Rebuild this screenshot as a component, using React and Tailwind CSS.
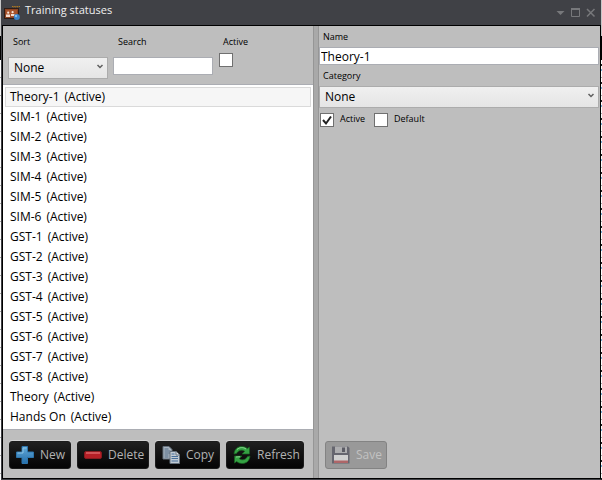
import { useState } from 'react';

const initialStatuses = [
  'Theory-1', 'SIM-1', 'SIM-2', 'SIM-3', 'SIM-4', 'SIM-5', 'SIM-6',
  'GST-1', 'GST-2', 'GST-3', 'GST-4', 'GST-5', 'GST-6', 'GST-7', 'GST-8',
  'Theory', 'Hands On',
];

const AppIcon = () => (
  <svg width="16" height="16" viewBox="0 0 16 16" aria-hidden="true">
    <path d="M8 1.5h8" stroke="#b07a22" strokeWidth="1" strokeDasharray="1.5 .7" />
    <path d="M9 2.5h6" stroke="#6d5026" strokeWidth="1" strokeDasharray="1 1" />
    <rect x="0.5" y="3.5" width="14" height="10" fill="#8c4322" stroke="#2e1d17" />
    <rect x="2" y="5" width="11" height="7" fill="#a8532c" />
    <circle cx="4.2" cy="7.7" r="1.1" fill="#f5e7dd" />
    <circle cx="8.6" cy="7.2" r="1.1" fill="#f5e7dd" />
    <path d="M2 12V9.5h4V12zM7 11V9h3.5v2z" fill="#f2ddd0" />
    <circle cx="12.8" cy="12" r="3" fill="#3b83c9" />
    <circle cx="12" cy="11" r="1.2" fill="#83c0ef" />
  </svg>
);

const PlusIcon = () => (
  <svg className="shrink-0" width="18" height="18" viewBox="1 1 18 18" aria-hidden="true">
    <defs>
      <linearGradient id="plus" x1="0" y1="0" x2="0" y2="1">
        <stop offset="0" stopColor="#62a9d8" />
        <stop offset="1" stopColor="#256fab" />
      </linearGradient>
    </defs>
    <path d="M7 1.5h5.5V7h6v5.5h-6v6H7v-6H1.5V7H7z" fill="url(#plus)" stroke="#2d75ac" strokeLinejoin="round" />
    <path d="M8 3h3.5M2.500 8H8V3" stroke="#8bc3e5" fill="none" />
  </svg>
);

const MinusIcon = () => (
  <svg className="shrink-0" width="18" height="18" viewBox="1 1 18 18" aria-hidden="true">
    <rect x="1.5" y="6.5" width="17" height="7" rx="1.5" fill="#b51f26" stroke="#881a1f" />
    <path d="M3 8h14" stroke="#dd6469" strokeWidth="1.5" />
  </svg>
);

const CopyIcon = () => (
  <svg className="shrink-0" width="18" height="18" viewBox="1 1 18 18" aria-hidden="true">
    <path d="M2 1.5h6L11 4.500V14H2z" fill="#a9b4bf" stroke="#65717d" />
    <path d="M3.500 4h4M3.500 6h6M3.500 8h6M3.500 10h4M3.500 12h4" stroke="#526c86" />
    <path d="M9 6.500h6l3.500 3.500v8.500H9z" fill="#c0cad3" stroke="#65717d" />
    <path d="M15 6.500V10h3.500" fill="#e4e9ed" stroke="#65717d" />
    <path d="M10.500 9h3M10.500 11.500h6.500M10.500 13.500h6.500M10.500 16h6.500" stroke="#476f99" />
  </svg>
);

const RefreshIcon = () => (
  <svg className="shrink-0" width="18" height="18" viewBox="1 1 18 18" aria-hidden="true">
    <path d="M2 9C2.500 4 5.500 1.500 10 1.500c2 0 4 .7 5.300 2L17.500 2v7H10l2.700-2.700C9.500 4 6 5.500 4.500 8.500z" fill="#35a344" stroke="#176020" strokeWidth=".7" />
    <path d="M18 11c-.5 5-3.500 7.500-8 7.500-2 0-4-.7-5.300-2L2.500 18v-7H10l-2.700 2.700c3.200 2.300 6.700.8 8.200-2.200z" fill="#35a344" stroke="#176020" strokeWidth=".7" />
    <path d="M5 4.500c3-2.500 6-2.500 9-.5M4 12l4-.3" stroke="#8bd391" fill="none" />
  </svg>
);

const SaveIcon = () => (
  <svg className="shrink-0" width="18" height="18" viewBox="1 1 18 18" aria-hidden="true">
    <path d="M1 1.500h16l1.500 1.500v15.500H1z" fill="#66666f" />
    <rect x="4" y="1.500" width="12" height="6.500" fill="#adadaf" />
    <rect x="11" y="2.500" width="3" height="4.500" fill="#5c5c65" />
    <rect x="3" y="10" width="14" height="8" fill="#d0d0d0" />
    <rect x="3" y="15.500" width="14" height="2.500" fill="#ae6668" />
  </svg>
);

const Chevron = () => (
  <svg className="pointer-events-none absolute right-1 top-1.5" width="8" height="8" viewBox="0 0 8 8" aria-hidden="true">
    <path d="M1.500 2L4 4.500 6.500 2" fill="none" stroke="#606060" strokeWidth="1.500" />
  </svg>
);

const Select = ({ id }) => (
  <div className="relative">
    <select id={id} className="block h-[22px] w-full appearance-none border border-[#acacac] bg-linear-to-b from-[#f0f0f0] to-[#e5e5e5] pl-[5px] text-xs leading-5 text-black outline-none">
      <option>None</option>
    </select>
    <Chevron />
  </div>
);

const Checkbox = ({ id, checked, onChange }) => (
  <span className="relative block size-[14px] shrink-0">
    <input
      id={id}
      type="checkbox"
      checked={checked}
      onChange={(e) => onChange(e.target.checked)}
      className="block size-[14px] appearance-none border border-[#707070] bg-white"
    />
    {checked && (
      <svg className="pointer-events-none absolute inset-0" width="14" height="14" viewBox="0 0 14 14" aria-hidden="true">
        <path d="M3 7l3 3.500L11 3.500" fill="none" stroke="#212121" strokeWidth="2" />
      </svg>
    )}
  </span>
);

const ToolButton = ({ icon, children, className }) => (
  <button
    type="button"
    className={`flex h-7 items-center gap-1.5 rounded-[3px] border border-[#1c1c1c] bg-linear-to-b from-[#202020] to-[#050505] pl-1.5 text-xs text-[#b2b2b2] shadow-[0_-1px_0_#d2d2d2] ${className}`}
  >
    {icon}
    {children}
  </button>
);

const TitleBar = () => (
  <header className="flex h-[25px] shrink-0 items-center bg-[#404146] pl-[3px] pr-[5px]">
    <AppIcon />
    <h1 className="grow pb-1 pl-[5px] text-[11px] text-[#f0f0f0]">Training statuses</h1>
    <div className="flex items-center gap-1 text-[#77787b]">
      <button type="button" aria-label="Options">
        <svg className="block" width="11" height="11" viewBox="0 0 11 11">
          <path d="M1.500 4h8l-4 4z" fill="currentColor" />
        </svg>
      </button>
      <button type="button" aria-label="Maximize">
        <svg className="block" width="11" height="11" viewBox="0 0 11 11">
          <path d="M1.500 2v7.500h8V2" fill="none" stroke="currentColor" />
          <path d="M1 2h9" stroke="currentColor" strokeWidth="2" />
        </svg>
      </button>
      <button type="button" aria-label="Close">
        <svg className="block" width="11" height="11" viewBox="0 0 11 11">
          <path d="M2 2l7.500 7.500M9.500 2L2 9.500" stroke="currentColor" strokeWidth="1.500" />
        </svg>
      </button>
    </div>
  </header>
);

const App = () => {
  const [names, setNames] = useState(initialStatuses);
  const [selected, setSelected] = useState(0);
  const [search, setSearch] = useState('');
  const [onlyActive, setOnlyActive] = useState(false);
  const [active, setActive] = useState(true);
  const [isDefault, setIsDefault] = useState(false);

  const rename = (value) => {
    setNames(names.map((name, i) => (i === selected ? value : name)));
  };

  return (
    <div className="flex min-h-screen bg-white font-['Open_Sans','Noto_Sans',sans-serif] text-xs text-black">
      {/* Edge of the grid behind the window */}
      <div className="flex w-px shrink-0 flex-col">
        <div className="h-9 bg-[#c8c8c8]" />
        <div className="h-6 bg-black" />
        <div className="grow bg-[repeating-linear-gradient(#fff_0_17px,#aaa_17px_18px)]" />
      </div>

      <div className="flex min-w-0 grow flex-col border-b border-[#404146] bg-[#404146]">
        <TitleBar />
        <main className="ml-px flex grow border border-black bg-[#bebebe]">
          <section className="flex w-[310px] shrink-0 flex-col">
            <div className="flex h-[58px] gap-[5px] pl-[5px] pt-2">
              <div className="w-[100px]">
                <label htmlFor="sort" className="block h-[23px] pl-[5px] text-[9px] leading-4">Sort</label>
                <Select id="sort" />
              </div>
              <div className="w-[100px]">
                <label htmlFor="search" className="block h-[23px] pl-[5px] text-[9px] leading-4">Search</label>
                <input
                  id="search"
                  type="text"
                  value={search}
                  onChange={(e) => setSearch(e.target.value)}
                  className="block h-[18px] w-full border border-[#abadb3] bg-white px-1 outline-none"
                />
              </div>
              <div className="pl-px">
                <label htmlFor="only-active" className="block h-[19px] pl-1 text-[9px] leading-4">Active</label>
                <Checkbox id="only-active" checked={onlyActive} onChange={setOnlyActive} />
              </div>
            </div>

            <ul className="grow border-y border-[#abadb3] bg-white px-0.5 pt-0.5">
              {names.map((name, i) => (
                name.toLowerCase().includes(search.toLowerCase()) && (
                  <li key={i}>
                    <button
                      type="button"
                      onClick={() => setSelected(i)}
                      className={`flex h-5 w-full gap-[5px] border pl-1 text-left leading-[18px] ${i === selected ? 'border-[#dadada] bg-[#f6f6f6]' : 'border-transparent'}`}
                    >
                      <span>{name}</span>
                      <span>(Active)</span>
                    </button>
                  </li>
                )
              ))}
            </ul>

            <div className="flex h-12 shrink-0 gap-1.5 pl-1.5 pt-[11px]">
              <ToolButton icon={<PlusIcon />} className="w-[62px]">New</ToolButton>
              <ToolButton icon={<MinusIcon />} className="w-[72px]">Delete</ToolButton>
              <ToolButton icon={<CopyIcon />} className="w-[65px]">Copy</ToolButton>
              <ToolButton icon={<RefreshIcon />} className="w-[78px]">Refresh</ToolButton>
            </div>
          </section>

          <div className="w-1.5 shrink-0 border-x border-[#969696] bg-[#a9a9a9]" />

          <section className="flex min-w-0 grow flex-col pr-px">
            <label htmlFor="name" className="block h-[21px] pl-1 pt-[3px] text-[9px] leading-4">Name</label>
            <input
              id="name"
              type="text"
              value={names[selected]}
              onChange={(e) => rename(e.target.value)}
              className="block h-[18px] w-full border border-[#abadb3] bg-white px-px text-xs outline-none"
            />
            <label htmlFor="category" className="block h-[21px] pl-1 pt-[3px] text-[9px] leading-4">Category</label>
            <Select id="category" />
            <div className="flex items-start pl-px pt-[5px] text-[9px]">
              <Checkbox id="active" checked={active} onChange={setActive} />
              <label htmlFor="active" className="w-10 pl-1.5 leading-3">Active</label>
              <Checkbox id="default" checked={isDefault} onChange={setIsDefault} />
              <label htmlFor="default" className="pl-1.5 leading-3">Default</label>
            </div>
            <div className="mt-auto h-[37px] pl-1.5">
              <button
                type="button"
                disabled
                className="flex h-7 w-[62px] items-center gap-1.5 rounded-[3px] border border-[#838383] bg-[#999] pl-1.5 text-xs text-[#c2c2c2]"
              >
                <SaveIcon />
                Save
              </button>
            </div>
          </section>
        </main>
      </div>

      <div className="flex w-px shrink-0 flex-col">
        <div className="h-9 bg-[#c8c8c8]" />
        <div className="h-6 bg-black" />
        <div className="grow bg-[repeating-linear-gradient(#fff_0_4px,#222_4px_6px,#fff_6px_9px,#79b4dc_9px_11px,#fff_11px_17px,#aaa_17px_18px)]" />
      </div>
    </div>
  );
};

export default App;
